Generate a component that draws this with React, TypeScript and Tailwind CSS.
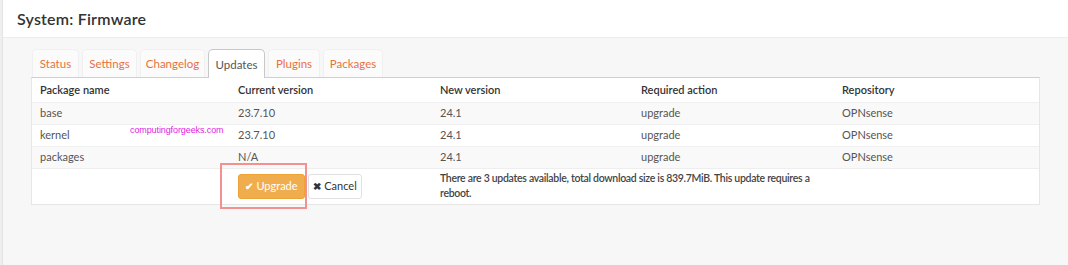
import React from "react";

const tabs = [
  { label: "Status", w: "w-[47px]" },
  { label: "Settings", w: "w-[55px]" },
  { label: "Changelog", w: "w-[65px]" },
  { label: "Updates", w: "w-[57px]", active: true },
  { label: "Plugins", w: "w-[52px]" },
  { label: "Packages", w: "w-[60px]" },
];

const rows = [
  ["base", "23.7.10", "24.1", "upgrade", "OPNsense"],
  ["kernel", "23.7.10", "24.1", "upgrade", "OPNsense"],
  ["packages", "N/A", "24.1", "upgrade", "OPNsense"],
];

export default function App() {
  return (
    <div
      className="relative flex h-[265px] w-[1068px] overflow-hidden bg-[#f7f7f7] text-[#555]"
      style={{ fontFamily: "Lato, 'Noto Sans', sans-serif" }}
    >
      <div className="w-[3px] shrink-0 border-r border-[#e4e4e4] bg-[#efefef]" />
      <div className="flex min-w-0 flex-1 flex-col">
        <header className="flex h-[38px] items-center border-b border-[#ececec] bg-white pl-[14px]">
          <h1 className="text-[16px] font-semibold tracking-[0.2px] text-[#333]">System: Firmware</h1>
        </header>
        <main className="pl-[28px] pr-[28px] pt-[11px]">
          <div className="flex gap-[3px] pl-[1px]">
            {tabs.map((t) => (
              <div
                key={t.label}
                className={
                  t.active
                    ? `${t.w} relative z-10 -mb-px flex h-[29px] items-center justify-center rounded-t-[5px] border border-b-0 border-[#c8c8c8] bg-white pt-[1px] text-[11.5px] text-[#555]`
                    : `${t.w} flex h-[28px] items-center justify-center rounded-t-[5px] border border-b-0 border-[#f0f0f0] bg-[#fbfbfb] pt-[1px] text-[11.5px] text-[#e9713c]`
                }
              >
                {t.label}
              </div>
            ))}
          </div>
          <div className="border border-[#e6e6e6] border-t-[#cfcfcf] bg-white">
            <table className="w-full table-fixed border-collapse text-left text-[11px]">
              <colgroup>
                <col className="w-[198px]" />
                <col className="w-[202px]" />
                <col className="w-[201px]" />
                <col className="w-[201px]" />
                <col />
              </colgroup>
              <thead>
                <tr className="h-[24px]">
                  {["Package name", "Current version", "New version", "Required action", "Repository"].map((h) => (
                    <th key={h} className="px-[8px] font-semibold text-[#333]">
                      {h}
                    </th>
                  ))}
                </tr>
              </thead>
              <tbody>
                {rows.map((r, i) => (
                  <tr key={i} className={`h-[22px] border-t border-[#f0f0f0] ${i % 2 === 0 ? "bg-[#f9f9f9]" : "bg-white"}`}>
                    {r.map((c, j) => (
                      <td key={j} className="px-[8px]">
                        {c}
                      </td>
                    ))}
                  </tr>
                ))}
                <tr className="h-[36px] border-t border-[#eeeeee]">
                  <td />
                  <td className="px-[8px] py-[5px]">
                    <div className="flex gap-[3px]">
                      <button className="flex h-[25px] w-[67px] items-center justify-center gap-[3px] rounded-[3px] border border-[#eea236] bg-[#f0ad4e] text-[11px] text-white">
                        <span className="text-[10px] font-bold">✔</span>
                        Upgrade
                      </button>
                      <button className="flex h-[25px] w-[54px] items-center justify-center gap-[3px] rounded-[3px] border border-[#e0e0e0] bg-white text-[11px] text-[#333]">
                        <span className="text-[10px] font-bold">✖</span>
                        Cancel
                      </button>
                    </div>
                  </td>
                  <td colSpan={2} className="whitespace-nowrap px-[8px] text-[10.5px] font-semibold leading-[15px] tracking-[-0.3px] text-[#444]">
                    There are 3 updates available, total download size is 839.7MiB. This update requires a
                    <br />
                    reboot.
                  </td>
                  <td />
                </tr>
              </tbody>
            </table>
          </div>
        </main>
      </div>
      <div
        className="absolute left-[130px] top-[124px] text-[9px] tracking-[-0.1px] text-[#e11de1]"
        style={{ fontFamily: "'Liberation Sans', Arial, sans-serif" }}
      >
        computingforgeeks.com
      </div>
      <div className="pointer-events-none absolute left-[220px] top-[163px] h-[46px] w-[87px] border-2 border-[#f39090]" />
    </div>
  );
}
